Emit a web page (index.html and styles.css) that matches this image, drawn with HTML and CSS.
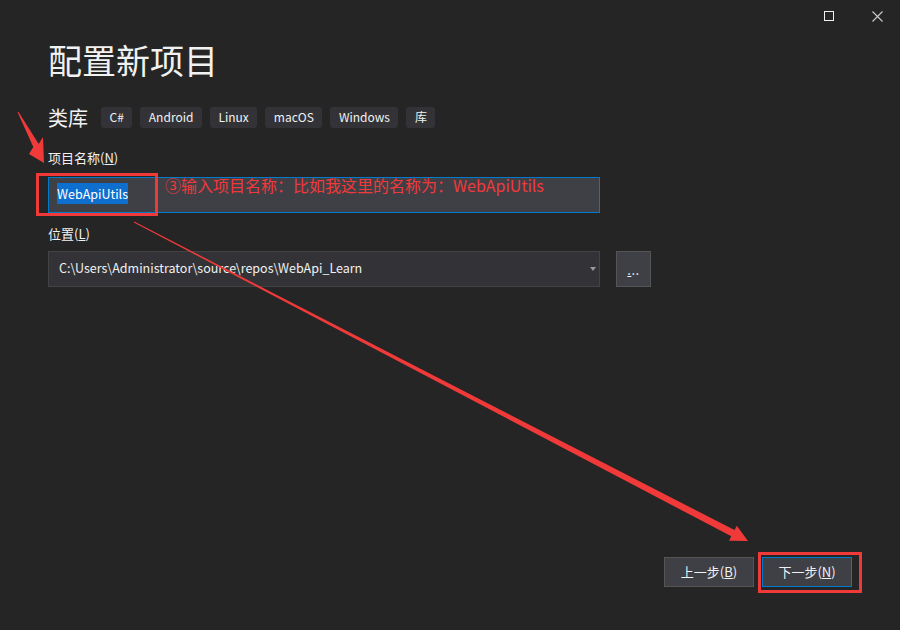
FILE: index.html
```html
<!DOCTYPE html>
<html lang="zh-CN">
<head>
  <meta charset="UTF-8">
  <meta name="viewport" content="width=device-width, initial-scale=1.0">
  <title>配置新项目</title>
  <link rel="stylesheet" href="styles.css">
</head>
<body>
  <div class="window">
    <!-- Title bar -->
    <div class="titlebar">
      <div class="winbtn max"><span class="max-box"></span></div>
      <div class="winbtn close">
        <svg width="11" height="11" viewBox="0 0 11 11"><path d="M0.5 0.5 L10.5 10.5 M10.5 0.5 L0.5 10.5" stroke="#cccccc" stroke-width="1.1" fill="none"/></svg>
      </div>
    </div>

    <h1>配置新项目</h1>

    <div class="tags">
      <span class="kind">类库</span>
      <span class="tag">C#</span>
      <span class="tag">Android</span>
      <span class="tag">Linux</span>
      <span class="tag">macOS</span>
      <span class="tag">Windows</span>
      <span class="tag">库</span>
    </div>

    <!-- Project name -->
    <label class="label label-name">项目名称(<u>N</u>)</label>
    <div class="textbox">
      <span class="selected">WebApiUtils</span>
      <span class="note">③输入项目名称：比如我这里的名称为：WebApiUtils</span>
    </div>

    <!-- Location -->
    <label class="label label-loc">位置(<u>L</u>)</label>
    <div class="location-row">
      <div class="combo">
        <span>C:\Users\Administrator\source\repos\WebApi_Learn</span>
        <span class="caret"></span>
      </div>
      <div class="browse"><span><u>.</u>..</span></div>
    </div>

    <!-- Navigation -->
    <div class="footer">
      <button type="button" class="btn">上一步(<u>B</u>)</button>
      <button type="button" class="btn primary">下一步(<u>N</u>)</button>
    </div>

    <!-- Red annotations drawn over the dialog -->
    <svg class="marks" width="900" height="630" viewBox="0 0 900 630">
      <rect x="37.5" y="174.5" width="119" height="40" fill="none" stroke="#f03a3a" stroke-width="3"/>
      <rect x="759.5" y="553.5" width="101" height="38" fill="none" stroke="#f03a3a" stroke-width="3"/>
      <polygon fill="#f03a3a" points="133.8,222.4 731.3,536.3 729,540.7 748,541 736.8,525.7 734.5,530.1 134.2,221.6"/>
      <polygon fill="#f03a3a" points="17.6,112.2 33.3,146.9 29,154 44,163 43,137 38.7,144.1 18.4,111.8"/>
    </svg>
  </div>
</body>
</html>
```

FILE: styles.css
```css
body {
  margin: 0;
  padding: 0;
  background-color: #252526;
  font-family: "Noto Sans CJK SC", "Noto Sans", sans-serif;
  color: #f1f1f1;
}

.window {
  position: relative;
  width: 900px;
  height: 630px;
  box-sizing: border-box;
  padding: 0 48px 43px;
  display: flex;
  flex-direction: column;
  overflow: hidden;
}

/* Title bar */
.titlebar {
  display: flex;
  justify-content: flex-end;
  height: 32px;
  margin-right: -48px;
}

.winbtn {
  width: 46px;
  height: 32px;
  display: flex;
  align-items: center;
  justify-content: center;
}

.winbtn.max {
  width: 50px;
}

.max-box {
  width: 8px;
  height: 8px;
  border: 1px solid #f1f1f1;
}

h1 {
  font-size: 34px;
  font-weight: normal;
  line-height: 40px;
  margin: 8px 0 0;
}

/* Tags */
.tags {
  display: flex;
  align-items: center;
  gap: 8px;
  margin-top: 27px;
  height: 21px;
}

.kind {
  font-size: 20px;
  line-height: 21px;
  margin-right: 5px;
}

.tag {
  background-color: #333337;
  border-radius: 3px;
  font-size: 12px;
  line-height: 20px;
  height: 21px;
  padding: 0 8.5px 1px;
  box-sizing: border-box;
}

.label {
  display: block;
  font-size: 13px;
  line-height: 18px;
}

.label-name {
  margin-top: 21px;
}

.label-loc {
  margin-top: 12px;
}

/* Project name box */
.textbox {
  position: relative;
  height: 36px;
  width: 552px;
  box-sizing: border-box;
  margin-top: 10px;
  background-color: #3f3f46;
  border: 1px solid #007acc;
  padding: 0 8px 3px;
  display: flex;
  align-items: center;
}

.selected {
  background-color: #0e6fcf;
  color: #ffffff;
  font-size: 12.5px;
  line-height: 21px;
}

.note {
  position: absolute;
  left: 116px;
  top: -3.5px;
  color: #f03a3a;
  font-size: 16px;
  line-height: 20px;
  white-space: nowrap;
}

/* Location */
.location-row {
  display: flex;
  gap: 16px;
  margin-top: 8px;
}

.combo {
  width: 552px;
  height: 36px;
  box-sizing: border-box;
  background-color: #333337;
  border: 1px solid #434346;
  padding: 0 3px 3px 10px;
  display: flex;
  align-items: center;
  justify-content: space-between;
  font-size: 12.5px;
}

.caret {
  width: 0;
  height: 0;
  margin-top: 2px;
  border-left: 3.5px solid transparent;
  border-right: 3.5px solid transparent;
  border-top: 4px solid #999999;
}

.browse {
  width: 35px;
  height: 36px;
  box-sizing: border-box;
  background-color: #3f3f46;
  border: 1px solid #555555;
  display: flex;
  align-items: center;
  justify-content: center;
  font-size: 13px;
  letter-spacing: 0.5px;
}

/* Footer buttons */
.footer {
  margin-top: auto;
  display: flex;
  justify-content: flex-end;
  gap: 8px;
}

.btn {
  width: 90px;
  height: 30px;
  box-sizing: border-box;
  background-color: #3f3f46;
  border: 1px solid #555555;
  color: #f1f1f1;
  font-family: "Noto Sans CJK SC", "Noto Sans", sans-serif;
  font-size: 13px;
  padding: 0 0 2px;
}

.btn.primary {
  border-color: #007acc;
}

.marks {
  position: absolute;
  top: 0;
  left: 0;
  pointer-events: none;
}
```
